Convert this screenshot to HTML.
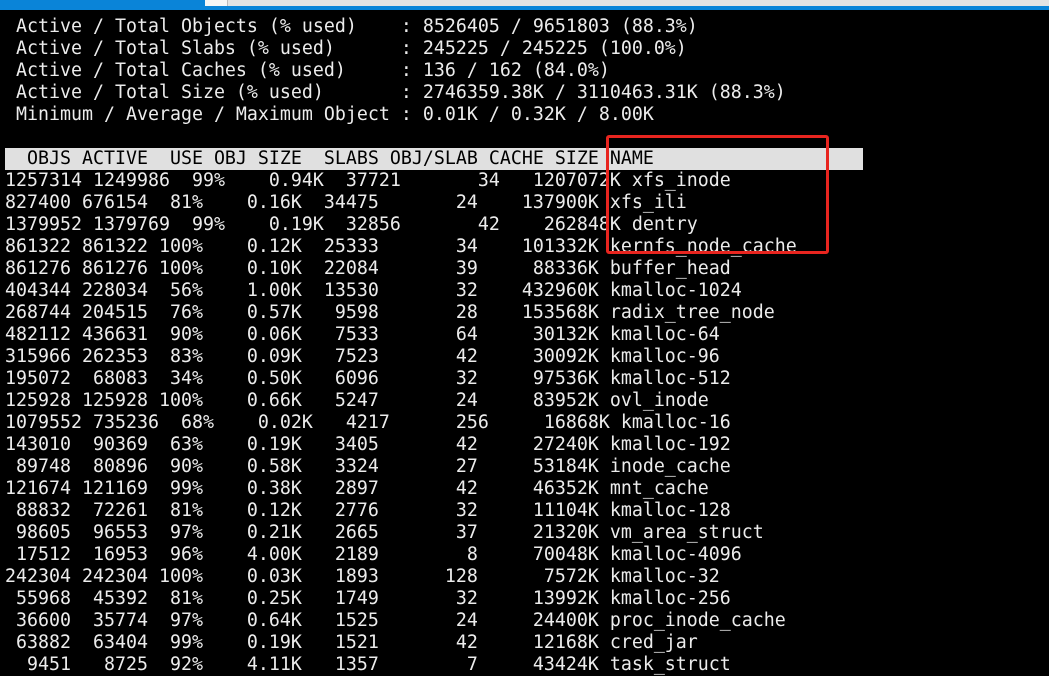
<!DOCTYPE html>
<html><head><meta charset="utf-8"><style>
html,body{margin:0;padding:0;background:#000;width:1049px;height:669px;overflow:hidden}
.top{position:absolute;left:0;top:0;width:1049px;height:10px;background:#0a84d8}
.grey{position:absolute;left:205px;top:0;width:844px;height:6px;background:#e3e3e3}
.tab{position:absolute;left:205px;top:0;width:22px;height:6px;background:#f6f6f6;border-right:1px solid #bbb}
pre{position:absolute;left:5px;top:16px;margin:0;font-family:"DejaVu Sans Mono","Liberation Mono",monospace;font-size:18.27px;line-height:22px;color:#ececec;white-space:pre}
.hd{background:#e0e0e0;color:#000;display:inline-block;width:858px}
.box{position:absolute;left:606px;top:135px;width:217px;height:113px;border:3px solid #e8251f;border-radius:3px}
</style></head><body>
<div class="top"></div><div class="grey"></div><div class="tab"></div>
<pre> Active / Total Objects (% used)    : 8526405 / 9651803 (88.3%)
 Active / Total Slabs (% used)      : 245225 / 245225 (100.0%)
 Active / Total Caches (% used)     : 136 / 162 (84.0%)
 Active / Total Size (% used)       : 2746359.38K / 3110463.31K (88.3%)
 Minimum / Average / Maximum Object : 0.01K / 0.32K / 8.00K

<span class="hd">  OBJS ACTIVE  USE OBJ SIZE  SLABS OBJ/SLAB CACHE SIZE NAME</span>
1257314 1249986  99%    0.94K  37721       34   1207072K xfs_inode
827400 676154  81%    0.16K  34475       24    137900K xfs_ili
1379952 1379769  99%    0.19K  32856       42    262848K dentry
861322 861322 100%    0.12K  25333       34    101332K kernfs_node_cache
861276 861276 100%    0.10K  22084       39     88336K buffer_head
404344 228034  56%    1.00K  13530       32    432960K kmalloc-1024
268744 204515  76%    0.57K   9598       28    153568K radix_tree_node
482112 436631  90%    0.06K   7533       64     30132K kmalloc-64
315966 262353  83%    0.09K   7523       42     30092K kmalloc-96
195072  68083  34%    0.50K   6096       32     97536K kmalloc-512
125928 125928 100%    0.66K   5247       24     83952K ovl_inode
1079552 735236  68%    0.02K   4217      256     16868K kmalloc-16
143010  90369  63%    0.19K   3405       42     27240K kmalloc-192
 89748  80896  90%    0.58K   3324       27     53184K inode_cache
121674 121169  99%    0.38K   2897       42     46352K mnt_cache
 88832  72261  81%    0.12K   2776       32     11104K kmalloc-128
 98605  96553  97%    0.21K   2665       37     21320K vm_area_struct
 17512  16953  96%    4.00K   2189        8     70048K kmalloc-4096
242304 242304 100%    0.03K   1893      128      7572K kmalloc-32
 55968  45392  81%    0.25K   1749       32     13992K kmalloc-256
 36600  35774  97%    0.64K   1525       24     24400K proc_inode_cache
 63882  63404  99%    0.19K   1521       42     12168K cred_jar
  9451   8725  92%    4.11K   1357        7     43424K task_struct</pre>
<div class="box"></div>
</body></html>
